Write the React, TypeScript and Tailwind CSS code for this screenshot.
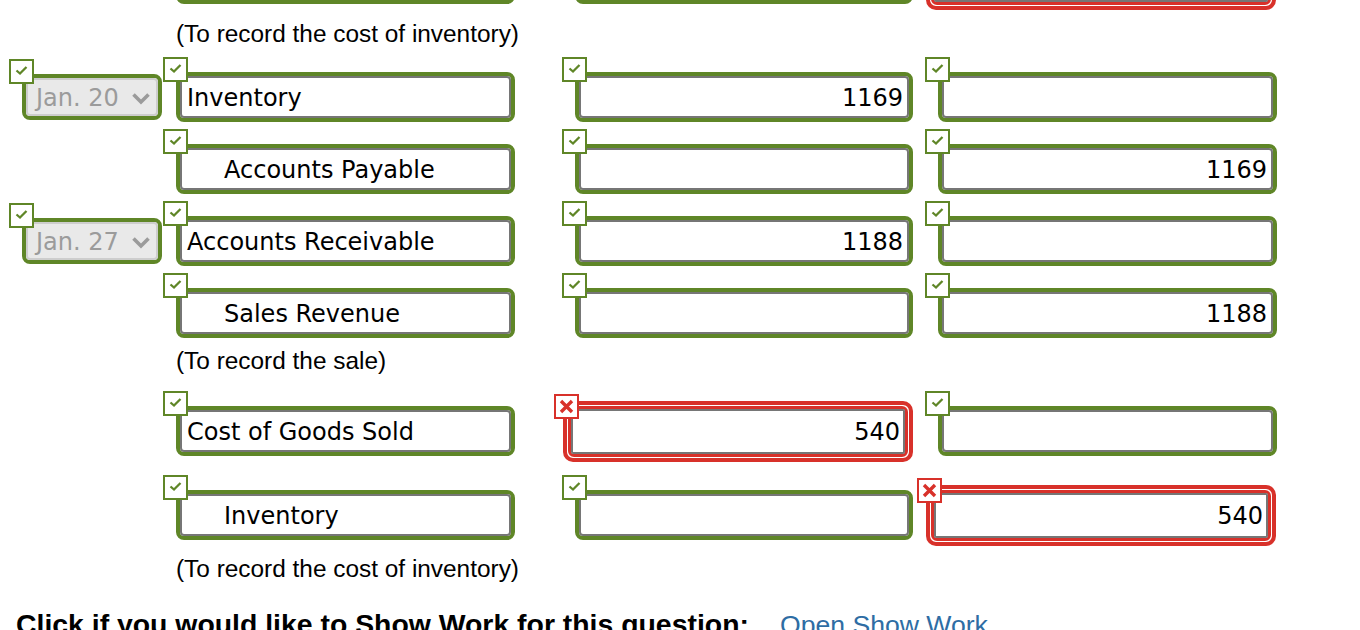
import React from "react";

type MarkProps = { bad?: boolean; pos: string };

function Mark({ bad, pos }: MarkProps) {
  return (
    <span
      className={`absolute z-10 w-[25px] h-[25px] border-2 bg-white ${
        bad ? "border-[#d8312a]" : "border-[#5f8627]"
      } ${pos}`}
    >
      <svg width="21" height="21" viewBox="0 0 21 21" className="block">
        {bad ? (
          <path
            d="M5 5 L16 16 M16 5 L5 16"
            fill="none"
            stroke="#d8312a"
            strokeWidth="3.4"
          />
        ) : (
          <path
            d="M5.5 9.5 L9 12.5 L15.5 6"
            fill="none"
            stroke="#5f8627"
            strokeWidth="2.3"
          />
        )}
      </svg>
    </span>
  );
}

type CellSpec = { red?: boolean; text?: string; indent?: boolean; right?: boolean };

const labelFont = "font-['DejaVu_Sans',Verdana,sans-serif] text-[24px] text-black";

function GreenBox({ spec }: { spec: CellSpec }) {
  const pad = spec.right ? "justify-end pr-[4px]" : spec.indent ? "pl-[42px]" : "pl-[5px]";
  return (
    <div className="relative w-full h-[50px] shrink-0 rounded-[8px] border-4 border-[#5f8627] bg-white">
      <div
        className={`h-full rounded-[4px] border-2 border-[#767676] flex items-center pt-[2px] whitespace-nowrap ${labelFont} ${pad}`}
      >
        {spec.text}
      </div>
      <Mark pos="left-[-17px] top-[-19px]" />
    </div>
  );
}

function RedBox({ spec }: { spec: CellSpec }) {
  return (
    <div className="relative w-[350px] -ml-[12px] h-[61px] shrink-0 rounded-[10px] border-4 border-[#d8312a] bg-white p-px">
      <div className="h-full rounded-[6px] border-[3px] border-[#d8312a]">
        <div
          className={`h-full rounded-[2px] border-2 border-[#767676] bg-white flex items-center pt-[2px] justify-end pr-[3px] ${labelFont}`}
        >
          {spec.text}
        </div>
      </div>
      <Mark bad pos="left-[-13px] top-[-11px]" />
    </div>
  );
}

function Cell({ spec }: { spec: CellSpec }) {
  return spec.red ? <RedBox spec={spec} /> : <GreenBox spec={spec} />;
}

function DateSelect({ label }: { label: string }) {
  return (
    <div className="relative w-[140px] h-[46px] shrink-0 rounded-[8px] border-4 border-[#5f8627] bg-white">
      <div className="h-full rounded-[4px] border-2 border-[#cdcdcd] bg-[#e9e9e9] flex items-center justify-between pt-[2px] pl-[8px] pr-[5px] font-['DejaVu_Sans',Verdana,sans-serif] text-[24px] text-[#9b9b9b] whitespace-nowrap">
        <span>{label}</span>
        <svg width="20" height="13" viewBox="0 0 20 13">
          <path d="M2.5 2.5 L10 10 L17.5 2.5" fill="none" stroke="#9b9b9b" strokeWidth="3.6" />
        </svg>
      </div>
      <Mark pos="left-[-17px] top-[-19px]" />
    </div>
  );
}

type RowProps = {
  date?: string;
  account: CellSpec;
  a1: CellSpec;
  a2: CellSpec;
  className?: string;
};

function Row({ date, account, a1, a2, className = "" }: RowProps) {
  return (
    <div className={`flex h-[50px] pl-[22px] shrink-0 ${className}`}>
      <div className="w-[140px] mr-[14px] flex items-center">
        {date ? <DateSelect label={date} /> : null}
      </div>
      <div className="w-[339px] mr-[60px] flex items-center">
        <Cell spec={account} />
      </div>
      <div className="w-[338px] mr-[25px] flex items-center">
        <Cell spec={a1} />
      </div>
      <div className="w-[339px] flex items-center">
        <Cell spec={a2} />
      </div>
    </div>
  );
}

function Note({ children, className = "" }: { children: React.ReactNode; className?: string }) {
  return (
    <div
      className={`pl-[176px] h-[28px] leading-[28px] text-[24.4px] text-black font-['Liberation_Sans',Arial,sans-serif] whitespace-nowrap shrink-0 ${className}`}
    >
      {children}
    </div>
  );
}

export default function App() {
  return (
    <div className="w-[1360px] h-[630px] overflow-hidden bg-white flex flex-col">
      <Row
        className="mt-[-46px]"
        account={{ text: "" }}
        a1={{ text: "", right: true }}
        a2={{ red: true, text: "" }}
      />
      <Note className="mt-[16px]">(To record the cost of inventory)</Note>
      <Row
        className="mt-[24px]"
        date="Jan. 20"
        account={{ text: "Inventory" }}
        a1={{ text: "1169", right: true }}
        a2={{ text: "", right: true }}
      />
      <Row
        className="mt-[22px]"
        account={{ text: "Accounts Payable", indent: true }}
        a1={{ text: "", right: true }}
        a2={{ text: "1169", right: true }}
      />
      <Row
        className="mt-[22px]"
        date="Jan. 27"
        account={{ text: "Accounts Receivable" }}
        a1={{ text: "1188", right: true }}
        a2={{ text: "", right: true }}
      />
      <Row
        className="mt-[22px]"
        account={{ text: "Sales Revenue", indent: true }}
        a1={{ text: "", right: true }}
        a2={{ text: "1188", right: true }}
      />
      <Note className="mt-[9px]">(To record the sale)</Note>
      <Row
        className="mt-[31px]"
        account={{ text: "Cost of Goods Sold" }}
        a1={{ red: true, text: "540" }}
        a2={{ text: "", right: true }}
      />
      <Row
        className="mt-[34px]"
        account={{ text: "Inventory", indent: true }}
        a1={{ text: "", right: true }}
        a2={{ red: true, text: "540" }}
      />
      <Note className="mt-[15px]">(To record the cost of inventory)</Note>
      <div className="mt-[25px] pl-[16px] flex items-baseline h-[32px] leading-[32px] font-['Liberation_Sans',Arial,sans-serif] whitespace-nowrap shrink-0">
        <span className="w-[764px] text-[28.4px] font-bold text-black">
          Click if you would like to Show Work for this question:
        </span>
        <span className="text-[26.6px] text-[#2e6da4]">Open Show Work</span>
      </div>
    </div>
  );
}
